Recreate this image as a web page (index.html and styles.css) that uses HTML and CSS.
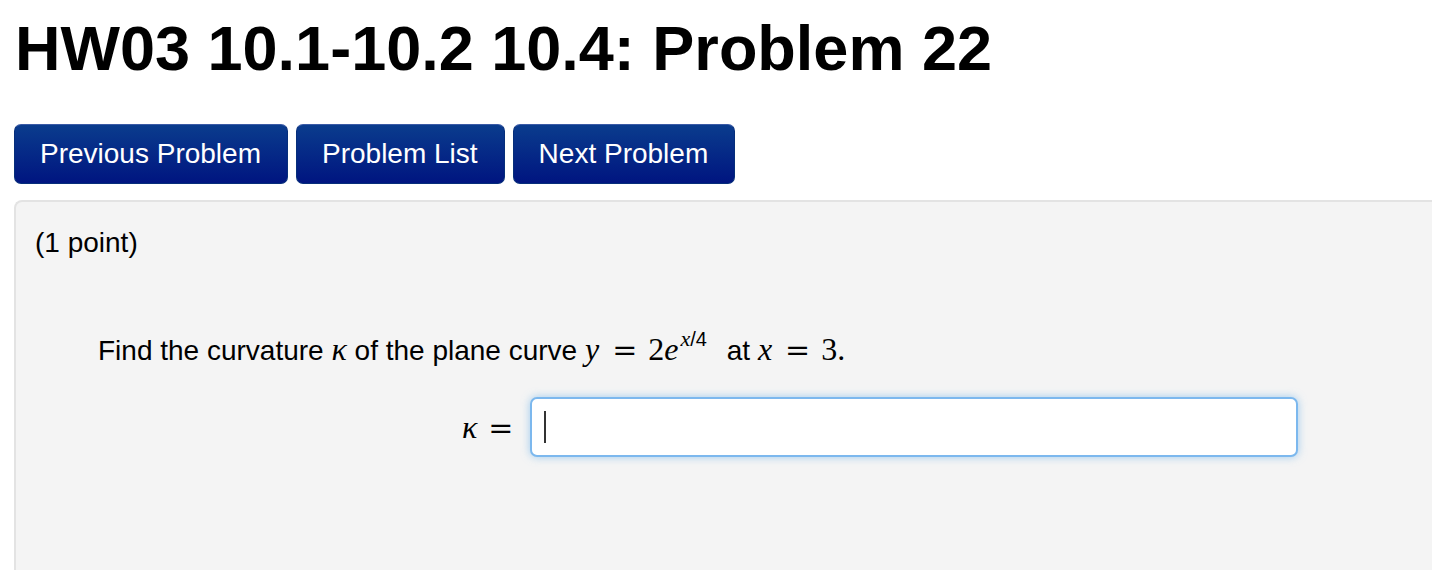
FILE: index.html
```html
<!DOCTYPE html>
<html lang="en">
<head>
    <meta charset="UTF-8">
    <title>HW03 10.1-10.2 10.4: Problem 22</title>
    <link rel="stylesheet" href="styles.css">
</head>
<body>
    <h1 class="page-title">HW03 10.1-10.2 10.4: Problem 22</h1>

    <div class="nav-buttons">
        <a class="nav-btn" href="#">Previous Problem</a>
        <a class="nav-btn" href="#">Problem List</a>
        <a class="nav-btn" href="#">Next Problem</a>
    </div>

    <div class="problem">
        <p class="points">(1 point)</p>

        <p class="question">
            Find the curvature <span class="mi">κ</span> of the plane curve <span class="math"><span class="mi">y</span><span class="mo">=</span><span class="mn">2</span><span class="mi">e</span><sup class="sup"><span class="mi">x</span>/4</sup></span> at <span class="math"><span class="mi">x</span><span class="mo">=</span><span class="mn">3.</span></span>
        </p>

        <div class="answer-row">
            <span class="mi">κ</span>
            <span class="mo">=</span>
            <div class="answer-box"><span class="caret"></span></div>
        </div>
    </div>
</body>
</html>
```

FILE: styles.css
```css
* {
    margin: 0;
    padding: 0;
    box-sizing: border-box;
}

body {
    font-family: "Liberation Sans", Arial, sans-serif;
    font-size: 28px;
    color: #000;
    background: white;
    overflow: hidden;
}

.page-title {
    font-size: 63px;
    font-weight: bold;
    line-height: 1;
    padding: 17px 0 0 15px;
    height: 124px;
}

.nav-buttons {
    display: flex;
    gap: 8px;
    padding-left: 14px;
}

.nav-btn {
    display: block;
    height: 60px;
    line-height: 58px;
    padding: 0 26px 0 25px;
    color: white;
    text-decoration: none;
    background: linear-gradient(to bottom, #0a3c8d 0%, #001580 100%);
    border: 1px solid #062e7a;
    border-top-color: #3a5aa6;
    border-radius: 7px;
}

.problem {
    margin: 16px 0 0 14px;
    width: 1440px;
    height: 400px;
    background: #f4f4f4;
    border-top: 2px solid #e3e3e3;
    border-left: 2px solid #e3e3e3;
    border-radius: 8px 0 0 0;
    padding: 25px 0 0 19px;
}

.points {
    line-height: 32px;
}

.question {
    margin: 70px 0 0 63px;
    line-height: 40px;
}

.math {
    white-space: nowrap;
}

.mi, .mn {
    font-family: "Liberation Serif", "Times New Roman", serif;
    font-size: 32px;
}

.mi {
    font-style: italic;
}

.mo {
    font-family: "DejaVu Serif", serif;
    font-size: 30px;
    margin: 0 11px 0 13px;
}

.sup {
    font-size: 20px;
    vertical-align: 14px;
    line-height: 0;
    margin: 0 12px 0 2px;
}

.sup .mi {
    font-size: 22px;
}

.answer-row {
    display: flex;
    align-items: center;
    margin: 26px 0 0 427px;
}

.answer-row .mo {
    margin: 0 0 0 11px;
}

.answer-box {
    margin-left: 16px;
    width: 768px;
    height: 60px;
    background: white;
    border: 2px solid #7cb8ee;
    border-radius: 7px;
    box-shadow: 0 0 8px rgba(102, 175, 233, 0.6);
    padding: 12px 0 0 12px;
}

.caret {
    display: block;
    width: 2px;
    height: 32px;
    background: #333;
}
```
